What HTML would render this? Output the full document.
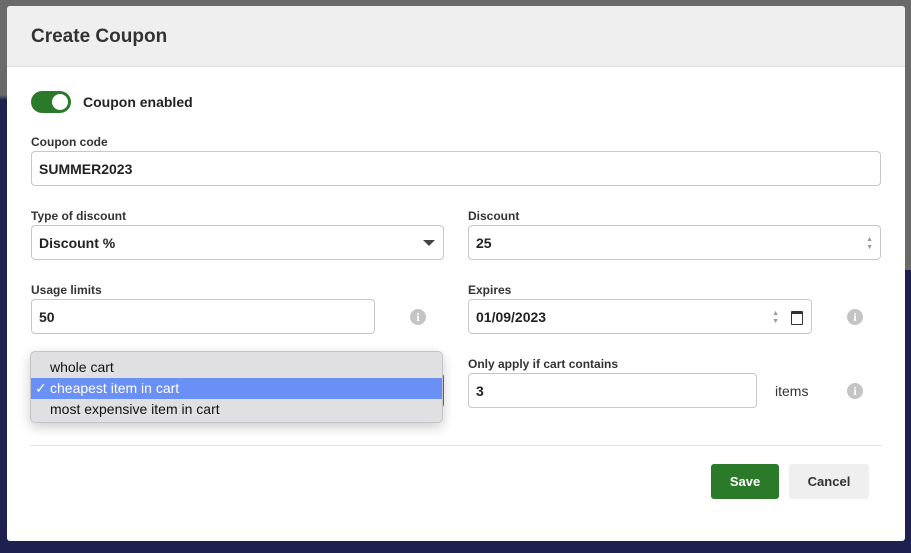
<!DOCTYPE html>
<html><head><style>
body{margin:0;width:911px;height:553px;overflow:hidden;font-family:"Liberation Sans",sans-serif;background:linear-gradient(180deg,#6a6a6a 0,#6a6a6a 95px,#1e2150 100px,#1e2150 100%);position:relative}
.rs{position:absolute;right:0;top:0;width:8px;height:270px;background:#6a6a6a}
.m{position:absolute;left:7px;top:6px;width:898px;height:535px;background:#fff;border-radius:3px;overflow:visible}
.h{height:60px;background:#efefef;border-bottom:1px solid #ddd;border-radius:3px 3px 0 0}
.h span{position:absolute;left:24px;top:20px;font-size:19px;font-weight:bold;color:#333}
.a{position:absolute}
.lbl{font-size:12px;font-weight:bold;color:#333}
.in{border:1px solid #c8c8c8;border-radius:4px;height:34px;box-sizing:border-box;font-size:14px;color:#222;padding:9px 7px;font-weight:bold}
.info{width:16px;height:16px;border-radius:50%;background:#c4c4c4;color:#fff;font-size:12px;font-weight:bold;text-align:center;line-height:16px;font-family:"Liberation Serif",serif}
</style></head><body>
<div class="rs"></div>
<div class="m">
<div class="h"><span>Create Coupon</span></div>
<div class="a" style="left:24px;top:85px;width:40px;height:22px;border-radius:11px;background:#2a7a2a"><div style="position:absolute;right:3px;top:3px;width:16px;height:16px;border-radius:50%;background:#fff"></div></div>
<div class="a" style="left:76px;top:88px;font-size:14px;font-weight:bold;color:#222">Coupon enabled</div>
<div class="a lbl" style="left:24px;top:129px">Coupon code</div>
<div class="a in" style="left:24px;top:145px;width:850px;height:35px">SUMMER2023</div>
<div class="a lbl" style="left:24px;top:203px">Type of discount</div>
<div class="a in" style="left:24px;top:219px;width:413px;height:35px">Discount %<span style="position:absolute;right:8px;top:14px;border-left:6px solid transparent;border-right:6px solid transparent;border-top:6px solid #444"></span></div>
<div class="a lbl" style="left:461px;top:203px">Discount</div>
<div class="a in" style="left:461px;top:219px;width:413px;height:35px">25<span style="position:absolute;right:7px;top:10px;font-size:7px;color:#999;line-height:8px">▲<br>▼</span></div>
<div class="a lbl" style="left:24px;top:277px">Usage limits</div>
<div class="a in" style="left:24px;top:293px;width:344px;height:35px">50</div>
<div class="a info" style="left:403px;top:303px">i</div>
<div class="a lbl" style="left:461px;top:277px">Expires</div>
<div class="a in" style="left:461px;top:293px;width:344px;height:35px">01/09/2023<span style="position:absolute;right:32px;top:10px;font-size:7px;color:#999;line-height:8px">▲<br>▼</span><span style="position:absolute;right:8px;top:11px;width:10px;height:10px;border:1.5px solid #333;border-top-width:3px;border-radius:1px"></span></div>
<div class="a info" style="left:840px;top:303px">i</div>
<div class="a in" style="left:24px;top:367px;width:413px;height:35px;border-color:#4a6ae0"></div>
<div class="a lbl" style="left:461px;top:351px">Only apply if cart contains</div>
<div class="a in" style="left:461px;top:367px;width:289px;height:35px">3</div>
<div class="a" style="left:768px;top:377px;font-size:14px;color:#333">items</div>
<div class="a info" style="left:840px;top:377px">i</div>
<div class="a" style="left:24px;top:439px;width:850px;height:1px;background:#ddd"></div>
<div class="a" style="left:704px;top:458px;width:68px;height:35px;background:#2a7a2a;border-radius:3px;color:#fff;font-size:13px;font-weight:bold;text-align:center;line-height:35px">Save</div>
<div class="a" style="left:782px;top:458px;width:80px;height:35px;background:#efefef;border-radius:3px;color:#333;font-size:13px;font-weight:bold;text-align:center;line-height:35px">Cancel</div>
</div>
<div class="a" style="left:30px;top:351px;width:413px;height:72px;background:#e0e0e2;border:1px solid #c4c4c6;border-radius:5px;box-sizing:border-box;box-shadow:0 4px 12px rgba(0,0,0,.2);font-size:14px;color:#111">
<div style="position:absolute;left:19px;top:7px">whole cart</div>
<div style="position:absolute;left:0;right:0;top:26px;height:21px;background:#6a8ff5;color:#fff"><span style="position:absolute;left:4px;top:2px">✓</span><span style="position:absolute;left:19px;top:2px">cheapest item in cart</span></div>
<div style="position:absolute;left:19px;top:49px">most expensive item in cart</div>
</div>
</body></html>
